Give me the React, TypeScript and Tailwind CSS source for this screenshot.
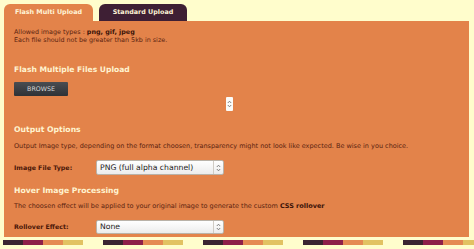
import React from "react";

const STRIPE = ["bg-[#3b2431]", "bg-[#8e1f4a]", "bg-[#e58a52]", "bg-[#e2c262]", "bg-[#fffdcc]"];

function UpDown() {
  return (
    <svg width="5" height="8" viewBox="0 0 5 8" className="shrink-0">
      <path d="M0.8 3 L2.5 1.2 L4.2 3" fill="none" stroke="#666" strokeWidth="0.8" />
      <path d="M0.8 5 L2.5 6.8 L4.2 5" fill="none" stroke="#666" strokeWidth="0.8" />
    </svg>
  );
}

function Select({ value, h }: { value: string; h: string }) {
  return (
    <div
      className={`flex ${h} w-[128px] items-center rounded-[2px] border border-[#b9b2a8] bg-gradient-to-b from-white to-[#ececec] pl-[3px] text-[7.7px] text-[#222]`}
    >
      <span className="flex-1 leading-none">{value}</span>
      <span className="flex h-full w-[10px] items-center justify-center border-l border-[#d0cbc4]">
        <UpDown />
      </span>
    </div>
  );
}

export default function App() {
  return (
    <div
      className="h-[249px] w-[474px] overflow-hidden bg-[#fffdcc]"
      style={{ fontFamily: '"DejaVu Sans", Verdana, sans-serif' }}
    >
      {/* Tabs */}
      <div className="flex gap-[6px] pl-[4px] pt-[4px]">
        <div className="flex h-[17px] w-[89px] items-center justify-center rounded-t-[6px] bg-[#e3834a] text-[6.4px] font-bold text-[#fff3d6]">
          Flash Multi Upload
        </div>
        <div className="flex h-[17px] w-[88px] items-center justify-center rounded-t-[6px] bg-[#3e1f34] text-[6.4px] font-bold text-[#fff3d6]">
          Standard Upload
        </div>
      </div>

      {/* Panel */}
      <div className="ml-[4px] flex h-[216px] w-[465px] flex-col bg-[#e3834a] pl-[10px] pt-[7px] text-[#5a1f10]">
        <p className="text-[6.4px] leading-[8px]">
          Allowed image types : <b className="text-[#3a1208]">png, gif, jpeg</b>
        </p>
        <p className="text-[6.4px] leading-[8px]">Each file should not be greater than 5kb in size.</p>

        <h2 className="mt-[21px] text-[7.6px] font-bold leading-[10px] text-[#fff3d0]">
          Flash Multiple Files Upload
        </h2>
        <button className="mt-[7px] flex h-[14px] w-[54px] items-center justify-center rounded-[1px] bg-gradient-to-b from-[#4a4d52] to-[#2f3236] text-[6.3px] text-[#d8d8d8]">
          BROWSE
        </button>
        <div className="ml-[212px] mt-[1px] flex h-[14px] w-[7px] flex-col items-center justify-center rounded-[1px] bg-[#fbfbf8]">
          <UpDown />
        </div>

        <h2 className="mt-[14px] text-[7.7px] font-bold leading-[10px] text-[#fff3d0]">Output Options</h2>
        <p className="mt-[7px] text-[6.5px] leading-[8px]">
          Output Image type, depending on the format choosen, transparency might not look like expected. Be wise in
          you choice.
        </p>
        <div className="mt-[10px] flex items-center">
          <span className="w-[82px] text-[6.3px] font-bold text-[#4a1608]">Image File Type:</span>
          <Select value="PNG (full alpha channel)" h="h-[15px]" />
        </div>

        <h2 className="mt-[11px] text-[7.7px] font-bold leading-[10px] text-[#fff3d0]">Hover Image Processing</h2>
        <p className="mt-[6px] text-[6.5px] leading-[8px]">
          The choosen effect will be applied to your original image to generate the custom{" "}
          <b className="text-[#3a1208]">CSS rollover</b>
        </p>
        <div className="mt-[10px] flex items-center">
          <span className="w-[82px] text-[6.3px] font-bold text-[#4a1608]">Rollover Effect:</span>
          <Select value="None" h="h-[14px]" />
        </div>
      </div>

      {/* Stripe */}
      <div className="ml-[3px] mt-[3px] flex h-[5px] w-[471px] overflow-hidden">
        {Array.from({ length: 5 }).flatMap((_, i) =>
          STRIPE.map((c, j) => <div key={`${i}-${j}`} className={`h-full w-[20px] shrink-0 ${c}`} />)
        )}
      </div>
    </div>
  );
}
